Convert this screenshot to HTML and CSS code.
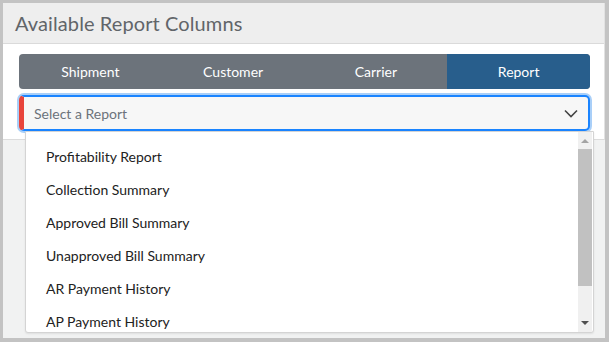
FILE: index.html
```html
<!DOCTYPE html>
<html>
<head>
<meta charset="utf-8">
<link rel="stylesheet" href="styles.css">
</head>
<body>
<div class="window">
  <div class="panel">
    <div class="panel-header"><h1 class="title">Available Report Columns</h1></div>
    <div class="panel-body">
      <div class="tabs">
        <div class="tab">Shipment</div>
        <div class="tab">Customer</div>
        <div class="tab">Carrier</div>
        <div class="tab active">Report</div>
      </div>
      <div class="select">
        <span class="placeholder">Select a Report</span>
        <svg class="chevron" width="14" height="9" viewBox="0 0 14 9"><path d="M1 1.5 L7 7.5 L13 1.5" fill="none" stroke="#444" stroke-width="1.6"/></svg>
      </div>
    </div>
  </div>
  <div class="dropdown">
    <ul class="options">
      <li>Profitability Report</li>
      <li>Collection Summary</li>
      <li>Approved Bill Summary</li>
      <li>Unapproved Bill Summary</li>
      <li>AR Payment History</li>
      <li>AP Payment History</li>
    </ul>
    <div class="scrollbar">
      <div class="arrow up"></div>
      <div class="thumb"></div>
      <div class="track"></div>
      <div class="arrow down"></div>
    </div>
  </div>
</div>
</body>
</html>
```
FILE: styles.css
```css
html, body { margin: 0; padding: 0; }
body {
  width: 609px;
  height: 342px;
  background: #c3c3c3;
  padding: 3px 4px 4px 3px;
  box-sizing: border-box;
  font-family: Lato, "Liberation Sans", sans-serif;
  overflow: hidden;
}
.window {
  position: relative;
  width: 602px;
  height: 335px;
  background: #f1f2f2;
}
.panel {
  background: #fff;
  border-bottom: 1px solid #dcdcdc;
  border-right: 1px solid #e2e2e2;
  height: 136px;
}
.panel-header {
  height: 40px;
  background: #eeeeee;
  border-bottom: 1px solid #dadada;
  padding-left: 12px;
  display: flex;
  align-items: center;
}
.title {
  margin: 0;
  font-size: 20px;
  font-weight: 400;
  color: #616569;
  letter-spacing: 0.1px;
}
.panel-body {
  padding: 10px 14px 0 16px;
}
.tabs {
  display: flex;
  height: 35px;
  border-radius: 4px;
  overflow: hidden;
  background: #6c737b;
}
.tab {
  flex: 1;
  display: flex;
  align-items: center;
  justify-content: center;
  color: #fff;
  font-size: 14px;
}
.tab.active { background: #285e8c; }
.select {
  margin-top: 6px;
  height: 32px;
  border: 2px solid #1a84ff;
  border-left: 5px solid #e8443b;
  border-radius: 5px;
  background: #f7f7f7;
  box-shadow: 0 0 0 2px #a9cff8;
  display: flex;
  align-items: center;
  justify-content: space-between;
  padding: 0 10px 0 10px;
}
.placeholder { font-size: 14px; color: #6c737b; }
.chevron { margin-top: 1px; }
.dropdown {
  position: absolute;
  left: 22px;
  top: 128px;
  width: 567px;
  height: 200px;
  background: #fff;
  border: 1px solid #d4d4d4;
  border-radius: 0 0 3px 3px;
  box-shadow: 0 1px 2px rgba(0,0,0,0.08);
  display: flex;
}
.options {
  list-style: none;
  margin: 0;
  padding: 8px 0 0 0;
  flex: 1;
  overflow: hidden;
}
.options li {
  height: 33px;
  line-height: 33px;
  padding-left: 20px;
  font-size: 14px;
  color: #222;
}
.scrollbar {
  width: 14px;
  margin-right: 1px;
  background: #f0f0f0;
  display: flex;
  flex-direction: column;
}
.arrow { height: 17px; position: relative; }
.arrow.up::after {
  content: "";
  position: absolute;
  left: 3px; top: 7px;
  border-left: 4px solid transparent;
  border-right: 4px solid transparent;
  border-bottom: 4px solid #a3a3a3;
}
.arrow.down::after {
  content: "";
  position: absolute;
  left: 3px; top: 6px;
  border-left: 4px solid transparent;
  border-right: 4px solid transparent;
  border-top: 4px solid #505050;
}
.thumb { height: 137px; background: #c1c1c1; }
.track { flex: 1; }
```
